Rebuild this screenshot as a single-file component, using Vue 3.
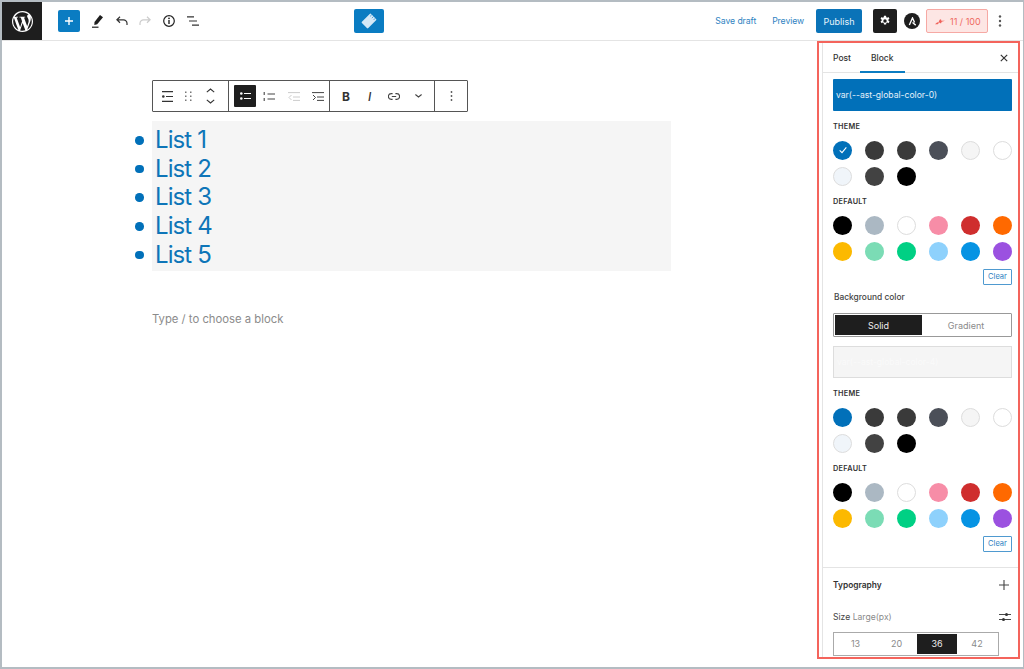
<script setup>
const theme = [
  { c: '#0170b9', check: true }, { c: '#3a3a3a' }, { c: '#3a3a3a' }, { c: '#4b4f58' }, { c: '#f5f5f5', b: 1 }, { c: '#ffffff', b: 1 },
  { c: '#f0f5fa', b: 1 }, { c: '#424242' }, { c: '#000000' },
]
const defaults = [
  { c: '#000000' }, { c: '#abb8c3' }, { c: '#ffffff', b: 1 }, { c: '#f78da7' }, { c: '#cf2e2e' }, { c: '#ff6900' },
  { c: '#fcb900' }, { c: '#7bdcb5' }, { c: '#00d084' }, { c: '#8ed1fc' }, { c: '#0693e3' }, { c: '#9b51e0' },
]
const palettes = [
  { theme, defaults },
  { theme: theme.map((s) => ({ c: s.c, b: s.b })), defaults },
]
const items = ['List 1', 'List 2', 'List 3', 'List 4', 'List 5']
const sizes = ['13', '20', '36', '42']
const wp = 'M20 10c0-5.51-4.49-10-10-10C4.48 0 0 4.49 0 10c0 5.52 4.48 10 10 10 5.51 0 10-4.48 10-10zM7.78 15.37L4.37 6.22c.55-.02 1.17-.08 1.17-.08.5-.06.44-.67-.06-.64 0 0-1.45.11-2.37.11-.18 0-.37 0-.58-.01C4.12 2.69 6.87 1.11 10 1.11c2.33 0 4.45.87 6.05 2.34-.68-.11-1.65.39-1.65 1.58 0 .74.45 1.36.9 2.1.35.61.55 1.36.55 2.46 0 1.49-1.4 5-1.4 5l-3.03-8.37c.54-.02.82-.08.82-.08.5-.05.44-.78-.06-.75 0 0-1.44.12-2.38.12-.87 0-2.33-.12-2.33-.12-.5-.03-.56.75-.06.78l.92.08 1.26 3.41zM17.41 10c.24-.64.74-1.87.43-4.25.7 1.29 1.05 2.71 1.05 4.25 0 3.29-1.73 6.24-4.4 7.78.97-2.59 1.94-5.2 2.92-7.78zM6.1 18.09C3.12 16.65 1.11 13.53 1.11 10c0-1.3.23-2.48.72-3.59C3.25 10.3 4.67 14.2 6.1 18.09zm4.03-6.63l2.58 6.98c-.86.29-1.76.45-2.71.45-.79 0-1.57-.11-2.29-.33.81-2.38 1.62-4.74 2.42-7.1z'
</script>

<template>
  <div class="page">
    <header class="top">
      <div class="logo">
        <svg width="21" height="21" viewBox="0 0 20 20"><path :d="wp" fill="#fff" /></svg>
      </div>
      <div class="tools">
        <button class="plus">
          <svg width="12" height="12" viewBox="0 0 12 12"><path d="M6 2v8M2 6h8" stroke="#fff" stroke-width="1.400" /></svg>
        </button>
        <svg class="t-pen" width="12" height="14" viewBox="0 0 12 14" fill="none"><path d="M2.500 8 8 1 11 3.200 5.200 10.300 2.300 11Z" fill="#1e1e1e" /><path d="M0 13.200h6.500" stroke="#1e1e1e" stroke-width="1.200" /></svg>
        <svg class="t-undo" width="12" height="10" viewBox="0 0 12 10" fill="none"><path d="M4 .8.900 3.800 4 6.800M.9 3.800H7.500A3.500 3.500 0 0 1 11 7.300V9" stroke="#333" stroke-width="1.200" /></svg>
        <svg class="t-redo" width="12" height="10" viewBox="0 0 12 10" fill="none"><path d="M8 .8l3.100 3L8 6.800M11.100 3.800H4.500A3.500 3.500 0 0 0 1 7.300V9" stroke="#ccc" stroke-width="1.200" /></svg>
        <svg class="t-info" width="12" height="12" viewBox="0 0 12 12" fill="none"><circle cx="6" cy="6" r="5.300" stroke="#222" stroke-width="1.200" /><path d="M6 5v4" stroke="#222" stroke-width="1.400" /><circle cx="6" cy="3.300" r=".9" fill="#222" /></svg>
        <svg class="t-list" width="12" height="10" viewBox="0 0 12 10" fill="none"><path d="M0 .8h7M2 5h8M5 9.200h7" stroke="#333" stroke-width="1.200" /></svg>
      </div>
      <div class="center">
        <button class="ticket">
          <svg width="16" height="16" viewBox="0 0 16 16"><g transform="rotate(45 8 8)"><rect x="3.500" y="1.500" width="9" height="13" rx="1" fill="#d4e8f6" /><path d="M5.500 1.500v2.500M8 1.500v2.500M10.500 1.500v2.500" stroke="#0a7cc2" stroke-width=".6" /></g></svg>
        </button>
      </div>
      <div class="actions">
        <span class="link save">Save draft</span>
        <span class="link preview">Preview</span>
        <button class="publish">Publish</button>
        <button class="gear">
          <svg width="12" height="12" viewBox="0 0 14 14"><path fill="#fff" fill-rule="evenodd" d="M5.800.7h2.400l.3 1.700 1 .5 1.500-.8 1.200 2-1.400 1 .1 1.100 1.400 1-1.200 2-1.500-.8-1 .6-.3 1.700H5.800l-.3-1.700-1-.6-1.500.8-1.200-2 1.400-1 0-1.100-1.400-1 1.200-2 1.500.8 1-.5ZM7 4.700a2 2 0 1 0 0 4 2 2 0 0 0 0-4Z" transform="translate(0 .3)" /></svg>
        </button>
        <span class="avatar">
          <svg width="9" height="9" viewBox="0 0 10 10" fill="none"><path d="M1.500 9 5 1l2.300 5.200M5 6.200 8.600 9" stroke="#fff" stroke-width="1.500" /></svg>
        </span>
        <button class="score">
          <svg width="10" height="7" viewBox="0 0 15 10"><path d="M0 9 3.500 6 5 7 7 2.500 9 1.500 9.500 4 15 4 10 5.500 9 8 6.500 6.500 4 9Z" fill="#f0625a" /></svg>
          <span>11 / 100</span>
        </button>
        <svg class="dots" width="4" height="12" viewBox="0 0 4 12"><circle cx="2" cy="1.500" r="1.200" fill="#555" /><circle cx="2" cy="6" r="1.200" fill="#555" /><circle cx="2" cy="10.500" r="1.200" fill="#555" /></svg>
      </div>
    </header>

    <div class="body">
      <main class="canvas">
        <div class="block-bar">
          <div class="group g1">
            <svg class="i-a" width="11" height="11" viewBox="0 0 11 11" fill="none"><path d="M0 .6h11M0 10.400h11M4 5.500h7" stroke="#333" stroke-width="1.100" /><circle cx="1.300" cy="5.500" r="1.300" fill="#333" /></svg>
            <svg class="i-b" width="7" height="11" viewBox="0 0 7 11"><g fill="#777"><rect y=".5" width="1.500" height="1.500" /><rect x="5" y=".5" width="1.500" height="1.500" /><rect y="4.500" width="1.500" height="1.500" /><rect x="5" y="4.500" width="1.500" height="1.500" /><rect y="8.500" width="1.500" height="1.500" /><rect x="5" y="8.500" width="1.500" height="1.500" /></g></svg>
            <svg class="i-c" width="9" height="16" viewBox="0 0 9 16" fill="none"><path d="M.8 4.200 4.500 1l3.700 3.200M.8 11.800 4.500 15l3.700-3.200" stroke="#333" stroke-width="1.100" /></svg>
          </div>
          <div class="group g2">
            <span class="active">
              <svg width="11" height="8" viewBox="0 0 11 8" fill="none"><circle cx="1.300" cy="1.500" r="1.300" fill="#fff" /><circle cx="1.300" cy="6.500" r="1.300" fill="#fff" /><path d="M4 1.500h7M4 6.500h7" stroke="#fff" stroke-width="1.200" /></svg>
            </span>
            <svg class="i-d" width="12" height="9" viewBox="0 0 12 9" fill="none"><path d="M4.500 2h7.500M4.500 7h7.500" stroke="#444" stroke-width="1.100" /><path d="M1.200 0v3M1.200 6v3" stroke="#444" stroke-width="1.100" /></svg>
            <svg class="i-e" width="12" height="9" viewBox="0 0 12 9" fill="none"><path d="M0 .6h12M5 5h7M5 8.400h7M3.500 3 1 5.500 3.500 8" stroke="#ccc" stroke-width="1" /></svg>
            <svg class="i-f" width="12" height="9" viewBox="0 0 12 9" fill="none"><path d="M0 .6h12M5 5h7M5 8.400h7M1 3l2.500 2.500L1 8" stroke="#444" stroke-width="1" /></svg>
          </div>
          <div class="group g3">
            <b class="bold">B</b>
            <i class="ital">I</i>
            <svg class="i-g" width="12" height="7" viewBox="0 0 12 7" fill="none"><path d="M4.600.6H3.300a2.900 2.900 0 0 0 0 5.800h1.300M7.400.6h1.300a2.900 2.900 0 0 1 0 5.800H7.400M3.800 3.500h4.400" stroke="#444" stroke-width="1.100" /></svg>
            <svg class="i-h" width="7" height="4" viewBox="0 0 7 4" fill="none"><path d="M.4.500 3.500 3 6.600.5" stroke="#444" stroke-width="1.100" /></svg>
          </div>
          <div class="group g4">
            <svg width="3" height="10" viewBox="0 0 3 10"><circle cx="1.500" cy="1" r=".9" fill="#555" /><circle cx="1.500" cy="5" r=".9" fill="#555" /><circle cx="1.500" cy="9" r=".9" fill="#555" /></svg>
          </div>
        </div>

        <ul class="list">
          <li v-for="item in items" :key="item">{{ item }}</li>
        </ul>
        <p class="hint">Type / to choose a block</p>
      </main>

      <aside class="side">
        <div class="panel">
          <div class="tabs">
            <span class="tab">Post</span>
            <span class="tab on">Block</span>
            <svg class="close" width="8" height="8" viewBox="0 0 8 8" fill="none"><path d="M.8.8l6.400 6.400M7.200.8.800 7.200" stroke="#333" stroke-width="1.200" /></svg>
          </div>

          <div class="value blue">var(--ast-global-color-0)</div>

          <template v-for="(p, i) in palettes" :key="i">
            <div v-if="i === 1" class="bg-head">
              <p class="bg-label">Background color</p>
              <div class="seg">
                <span class="seg-on">Solid</span>
                <span class="seg-off">Gradient</span>
              </div>
              <div class="value grey">var(--ast-global-color-4)</div>
            </div>
            <h4 class="cap" :class="{ first: i === 0 }">THEME</h4>
            <div class="swatches">
              <span v-for="(s, n) in p.theme" :key="n" class="swatch" :class="{ edged: s.b }" :style="{ background: s.c }">
                <svg v-if="s.check" width="10" height="10" viewBox="0 0 12 12" fill="none"><path d="M2 6.500 4.800 9.200 10 2.800" stroke="#fff" stroke-width="1.300" /></svg>
              </span>
            </div>
            <h4 class="cap second">DEFAULT</h4>
            <div class="swatches">
              <span v-for="(s, n) in p.defaults" :key="n" class="swatch" :class="{ edged: s.b }" :style="{ background: s.c }"></span>
            </div>
            <div class="clear-row"><button class="clear">Clear</button></div>
          </template>

          <div class="typo">
            <span>Typography</span>
            <svg width="10" height="10" viewBox="0 0 10 10" fill="none"><path d="M5 0v10M0 5h10" stroke="#444" stroke-width="1.100" /></svg>
          </div>
          <div class="size-head">
            <span class="size-label">Size <em>Large(px)</em></span>
            <svg width="12" height="10" viewBox="0 0 12 10" fill="none"><path d="M0 2.500h12M0 7.500h12" stroke="#333" stroke-width=".9" /><circle cx="7.500" cy="2.500" r="1.500" fill="#333" /><circle cx="4.500" cy="7.500" r="1.500" fill="#333" /></svg>
          </div>
          <div class="sizes">
            <span v-for="s in sizes" :key="s" class="size" :class="{ sel: s === '36' }">{{ s }}</span>
          </div>
        </div>
      </aside>
    </div>
  </div>
</template>

<style>
html, body { margin: 0; background: #fff; }
</style>

<style scoped>
.page {
  width: 1024px; height: 669px; box-sizing: border-box;
  border: 2px solid #b4bcc2; border-right-width: 1px; background: #fff; overflow: hidden;
  display: flex; flex-direction: column;
  font-family: Inter, "Liberation Sans", sans-serif; color: #1e1e1e;
}
button { border: 0; padding: 0; font: inherit; display: flex; align-items: center; justify-content: center; }
.top { height: 38px; flex: none; display: flex; align-items: center; border-bottom: 1px solid #e4e4e4; }
.logo { width: 40px; height: 38px; background: #1e1e1e; display: flex; align-items: center; justify-content: center; flex: none; }
.tools { display: flex; align-items: center; margin-left: 16px; }
.plus { width: 22px; height: 22px; background: #0a7cc2; border-radius: 2px; }
.t-pen { margin-left: 12px; }
.t-undo { margin-left: 12px; }
.t-redo { margin-left: 11px; }
.t-info { margin-left: 12px; }
.t-list { margin-left: 12px; }
.center { margin-left: 155px; }
.ticket { width: 30px; height: 24px; background: #0a7cc2; border-radius: 2px; }
.actions { margin-left: auto; display: flex; align-items: center; padding-right: 21px; }
.link { font-size: 8.700px; letter-spacing: -.1px; color: #2f83c2; }
.preview { margin-left: 16px; }
.publish { margin-left: 12px; width: 46px; height: 24px; background: #0a73b8; color: #e8f3fb; font-size: 9px; border-radius: 2px; }
.gear { margin-left: 11px; width: 24px; height: 24px; background: #1e1e1e; border-radius: 2px; }
.avatar { margin-left: 7px; width: 16px; height: 16px; border-radius: 50%; background: #1e1e1e; display: flex; align-items: center; justify-content: center; }
.score { margin-left: 6px; width: 62px; height: 24px; background: #fde6e4; border: 1px solid #f6a9a4; box-sizing: border-box; border-radius: 2px; color: #ef6a62; font-size: 9px; gap: 5px; justify-content: flex-start; padding-left: 8px; }
.dots { margin-left: 10px; }

.body { flex: 1; min-height: 0; display: flex; }
.canvas { flex: 1; min-width: 0; padding: 39px 0 0 150px; box-sizing: border-box; }
.block-bar { width: 316px; height: 32px; box-sizing: border-box; border: 1px solid #555; display: flex; border-radius: 1px; }
.group { display: flex; align-items: center; height: 100%; box-sizing: border-box; }
.group + .group { border-left: 1px solid #555; }
.g1 { width: 75px; }
.g2 { width: 101px; }
.g3 { width: 105px; }
.g4 { flex: 1; justify-content: center; }
.i-a { margin-left: 9px; }
.i-b { margin-left: 12px; }
.i-c { margin-left: 14px; }
.active { margin-left: 5px; width: 22px; height: 22px; background: #1e1e1e; border-radius: 1px; display: flex; align-items: center; justify-content: center; }
.i-d { margin-left: 7px; }
.i-e { margin-left: 13px; }
.i-f { margin-left: 12px; }
.bold { margin-left: 12px; font-size: 12px; font-weight: 700; width: 8px; color: #333; }
.ital { margin-left: 18px; font-size: 12px; width: 4px; font-weight: 500; color: #333; }
.i-g { margin-left: 16px; }
.i-h { margin-left: 15px; }
.list { margin: 9px 0 0; padding: 5px 0 0 3px; width: 519px; height: 150px; box-sizing: border-box; background: #f5f5f5; color: #0e75b8; font-size: 24px; line-height: 28.700px; letter-spacing: -.9px; list-style: none; }
.list li { position: relative; }
.list li::before { content: ""; position: absolute; left: -20px; top: 10px; width: 8.500px; height: 8.500px; border-radius: 50%; background: #0170b9; }
.hint { margin: 40px 0 0; font-size: 11.300px; line-height: 16px; color: #8b8b8b; }

.side { width: 203px; height: 618px; box-sizing: border-box; margin-right: 3px; border: 2px solid #f4645c; flex: none; overflow: hidden; }
.panel { height: 100%; border-left: 1px solid #e4e4e4; padding: 0 6px 0 10px; box-sizing: border-box; margin-left: 3px; }
.tabs { height: 30px; box-sizing: border-box; margin: 0 -6px 0 -10px; padding-left: 10px; display: flex; align-items: center; border-bottom: 1px solid #e4e4e4; font-size: 8.500px; font-weight: 500; }
.tab { color: #333; }
.tab.on { margin-left: 20px; height: 100%; display: flex; align-items: center; position: relative; }
.tab.on::after { content: ""; position: absolute; left: -11px; right: -11px; bottom: -1px; height: 2px; background: #0a7cc2; }
.close { margin-left: auto; margin-right: 10px; }
.value { height: 32px; margin-top: 6px; display: flex; align-items: center; padding-left: 3px; font-size: 8.600px; }
.blue { background: #0170b9; color: #e6f1f9; border-radius: 1px; }
.cap { margin: 0; font-size: 7.300px; line-height: 10px; font-weight: 600; letter-spacing: .3px; color: #333; }
.cap.first { margin-top: 11px; }
.cap.second { margin-top: 11px; }
.bg-label { margin: 6px 0 0; padding-left: 1px; font-size: 8.400px; line-height: 12px; color: #444; font-weight: 500; }
.seg { margin-top: 10.700px; height: 24px; border: 1px solid #999; box-sizing: border-box; padding: 1px; display: flex; border-radius: 1px; font-size: 9px; }
.seg-on { width: 87px; background: #1e1e1e; color: #eee; display: flex; align-items: center; justify-content: center; }
.seg-off { flex: 1; color: #8a8a8a; display: flex; align-items: center; justify-content: center; }
.grey { margin-top: 8.700px; background: #f5f5f5; color: #fafafa; border: 1px solid #ddd; box-sizing: border-box; margin-bottom: 11px; }
.swatches { display: grid; grid-template-columns: repeat(6, 19px); column-gap: 13px; row-gap: 7.700px; margin-top: 8.500px; }
.swatch { width: 19px; height: 19px; border-radius: 50%; display: flex; align-items: center; justify-content: center; box-sizing: border-box; }
.edged { border: 1px solid #ddd; }
.clear-row { display: flex; justify-content: flex-end; margin-top: 7.300px; }
.clear { width: 29px; height: 16px; background: #fff; border: 1px solid #4f9ad0; box-sizing: border-box; border-radius: 1px; font-size: 7.500px; color: #2f83c2; }
.typo { margin: 15px -6px 0 -10px; padding: 0 9px 0 10px; height: 36px; box-sizing: border-box; border-top: 1px solid #e4e4e4; display: flex; align-items: center; justify-content: space-between; font-size: 8.400px; font-weight: 600; color: #333; }
.size-head { margin-top: 8.500px; height: 12px; display: flex; align-items: center; justify-content: space-between; width: 178px; font-size: 8.600px; color: #444; }
.size-label em { font-style: normal; color: #8a8a8a; }
.sizes { margin-top: 8.500px; width: 166px; height: 24px; border: 1px solid #aaa; box-sizing: border-box; padding: 1px; display: grid; grid-template-columns: 41px 41px 40px 1fr; font-size: 9px; color: #8a8a8a; }
.size { display: flex; align-items: center; justify-content: center; }
.sel { background: #1e1e1e; color: #eee; }
</style>
